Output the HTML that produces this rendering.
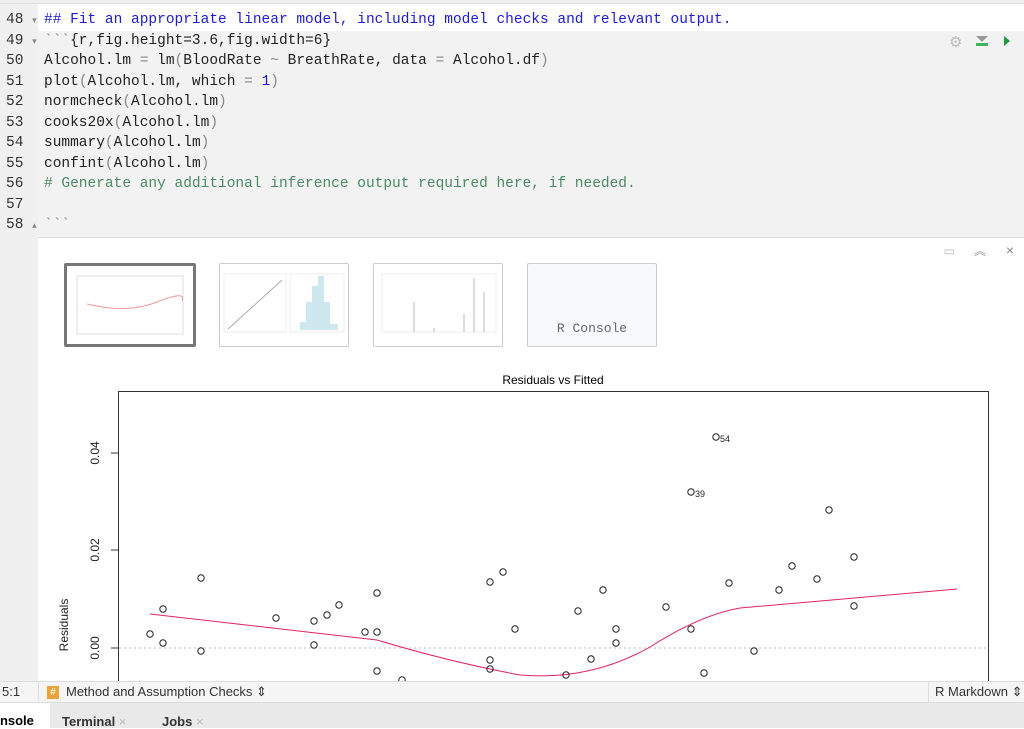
<!DOCTYPE html>
<html><head><style>
body{margin:0;width:1024px;height:727px;overflow:hidden;background:#fff;font-family:"Liberation Sans",sans-serif;position:relative}
.code{position:absolute;left:0;top:0;width:1024px;height:237px;background:#fff}
.gut{position:absolute;left:0;top:0;width:38px;height:681px;background:#f0f0f0}
.chunk{position:absolute;left:38px;top:31px;width:986px;height:206px;background:#f2f2f2}
.ln{position:absolute;font-family:"Liberation Mono",monospace;font-size:14.5px;white-space:pre;line-height:20.5px}
.num{color:#333;left:6px}
.txt{left:44px;color:#222}
.b{color:#1b1bd8}.g{color:#4b8c65}.o{color:#888}
.panel{position:absolute;left:38px;top:237px;width:986px;height:444px;background:#fff;border-top:1px solid #ddd}
.th{position:absolute;top:25px;width:128px;height:82px;border:1px solid #ccc;border-radius:2px;background:#fff}
.status{position:absolute;left:0;top:681px;width:1024px;height:20px;background:#f5f5f5;border-top:1px solid #ddd;border-bottom:1px solid #ddd;font-size:13px;color:#333}
.tabs{position:absolute;left:0;top:702px;width:1024px;height:25px;background:#e9e9e9;border-top:1px solid #ddd}
</style></head><body>
<div class="code"></div>
<div class="gut"></div>
<div class="chunk"></div>
<div style="position:absolute;left:0;top:0;width:1024px;height:3px;background:#eee;border-bottom:1px solid #ddd"></div>
<div class="ln num" style="top:10px">48 <span class="o" style="font-size:9px">▾</span></div>
<div class="ln txt b" style="top:10px">## Fit an appropriate linear model, including model checks and relevant output.</div>
<div class="ln num" style="top:31px">49 <span class="o" style="font-size:9px">▾</span></div>
<div class="ln txt" style="top:31px"><span class="o">&#96;&#96;&#96;</span>{r,fig.height=3.6,fig.width=6}</div>
<div class="ln num" style="top:51px">50</div>
<div class="ln txt" style="top:51px">Alcohol.lm <span class="o">=</span> lm<span class="o">(</span>BloodRate <span class="o">~</span> BreathRate, data <span class="o">=</span> Alcohol.df<span class="o">)</span></div>
<div class="ln num" style="top:72px">51</div>
<div class="ln txt" style="top:72px">plot<span class="o">(</span>Alcohol.lm, which <span class="o">=</span> <span class="b">1</span><span class="o">)</span></div>
<div class="ln num" style="top:92px">52</div>
<div class="ln txt" style="top:92px">normcheck<span class="o">(</span>Alcohol.lm<span class="o">)</span></div>
<div class="ln num" style="top:113px">53</div>
<div class="ln txt" style="top:113px">cooks20x<span class="o">(</span>Alcohol.lm<span class="o">)</span></div>
<div class="ln num" style="top:133px">54</div>
<div class="ln txt" style="top:133px">summary<span class="o">(</span>Alcohol.lm<span class="o">)</span></div>
<div class="ln num" style="top:154px">55</div>
<div class="ln txt" style="top:154px">confint<span class="o">(</span>Alcohol.lm<span class="o">)</span></div>
<div class="ln num" style="top:174px">56</div>
<div class="ln txt g" style="top:174px"># Generate any additional inference output required here, if needed.</div>
<div class="ln num" style="top:195px">57</div>
<div class="ln num" style="top:215px">58 <span class="o" style="font-size:9px">▴</span></div>
<div class="ln txt o" style="top:215px">&#96;&#96;&#96;</div>
<div style="position:absolute;left:949px;top:33px;color:#bbb;font-size:15px">⚙</div>
<div style="position:absolute;left:976px;top:36px;width:0;height:0;border-left:6px solid transparent;border-right:6px solid transparent;border-top:6px solid #999"></div>
<div style="position:absolute;left:976px;top:43px;width:12px;height:3px;background:#3cb55a"></div>
<div style="position:absolute;left:1004px;top:36px;width:0;height:0;border-top:5px solid transparent;border-bottom:5px solid transparent;border-left:6px solid #1a9e3a"></div>
<div class="panel">
<div style="position:absolute;right:69px;top:6px;color:#bbb;font-size:12px">▭</div>
<div style="position:absolute;right:38px;top:4px;color:#999;font-size:12px">︽</div>
<div style="position:absolute;right:10px;top:4px;color:#888;font-size:14px">×</div>
<div class="th" style="left:26px;border:3px solid #777;width:126px;height:78px"><svg width="126" height="78"><rect x="10" y="10" width="106" height="58" fill="none" stroke="#ddd"/><path d="M20 38 Q60 48 90 36 T115 35" stroke="#e99" fill="none"/></svg></div>
<div class="th" style="left:181px"><svg width="128" height="82"><rect x="4" y="10" width="62" height="58" fill="none" stroke="#eee"/><path d="M8 65 L62 16" stroke="#aaa"/><rect x="70" y="10" width="54" height="58" fill="none" stroke="#eee"/><rect x="80" y="58" width="6" height="8" fill="#cfe8ef"/><rect x="86" y="38" width="6" height="28" fill="#cfe8ef"/><rect x="92" y="22" width="6" height="44" fill="#cfe8ef"/><rect x="98" y="12" width="6" height="54" fill="#cfe8ef"/><rect x="104" y="38" width="6" height="28" fill="#cfe8ef"/><rect x="110" y="60" width="8" height="6" fill="#cfe8ef"/></svg></div>
<div class="th" style="left:335px"><svg width="128" height="82"><rect x="8" y="10" width="114" height="58" fill="none" stroke="#eee"/><path d="M40 68V38M60 68V64M100 68V14M110 68V28M90 68V50" stroke="#bbb"/></svg></div>
<div class="th" style="left:489px;background:#f8f9fc"><div style="position:absolute;left:0;right:0;top:57px;text-align:center;font-family:'Liberation Mono',monospace;font-size:13px;color:#666">R Console</div></div>
</div>
<svg style="position:absolute;left:0;top:237px" width="1024" height="444">
<text x="553" y="147" font-size="12" text-anchor="middle" font-family="Liberation Sans">Residuals vs Fitted</text>
<rect x="118.5" y="154.5" width="870" height="300" fill="none" stroke="#333"/>
<g stroke="#333"><line x1="111" y1="216" x2="118" y2="216"/><line x1="111" y1="313" x2="118" y2="313"/><line x1="111" y1="411" x2="118" y2="411"/></g>
<g font-size="12" font-family="Liberation Sans" fill="#222">
<text transform="translate(99,216) rotate(-90)" text-anchor="middle">0.04</text>
<text transform="translate(99,313) rotate(-90)" text-anchor="middle">0.02</text>
<text transform="translate(99,411) rotate(-90)" text-anchor="middle">0.00</text>
<text transform="translate(68,388) rotate(-90)" text-anchor="middle">Residuals</text>
<text x="720" y="205" font-size="9">54</text><text x="695" y="260" font-size="9">39</text>
</g>
<line x1="119" y1="411" x2="988" y2="411" stroke="#bbb" stroke-dasharray="2,3"/>
<path d="M150 377 L377 403 Q450 425 520 438 Q590 444 650 410 Q700 378 740 371 L957 352" fill="none" stroke="#e0245e"/>
<g fill="none" stroke="#222" stroke-width="1">
<circle cx="150" cy="397" r="3.2"/><circle cx="163" cy="372" r="3.2"/><circle cx="163" cy="406" r="3.2"/><circle cx="201" cy="341" r="3.2"/><circle cx="201" cy="414" r="3.2"/><circle cx="276" cy="381" r="3.2"/><circle cx="314" cy="384" r="3.2"/><circle cx="314" cy="408" r="3.2"/><circle cx="327" cy="378" r="3.2"/><circle cx="339" cy="368" r="3.2"/><circle cx="365" cy="395" r="3.2"/><circle cx="377" cy="356" r="3.2"/><circle cx="377" cy="395" r="3.2"/><circle cx="377" cy="434" r="3.2"/><circle cx="402" cy="443" r="3.2"/><circle cx="490" cy="345" r="3.2"/><circle cx="503" cy="335" r="3.2"/><circle cx="490" cy="423" r="3.2"/><circle cx="490" cy="432" r="3.2"/><circle cx="515" cy="392" r="3.2"/><circle cx="566" cy="438" r="3.2"/><circle cx="578" cy="374" r="3.2"/><circle cx="591" cy="422" r="3.2"/><circle cx="603" cy="353" r="3.2"/><circle cx="616" cy="392" r="3.2"/><circle cx="616" cy="406" r="3.2"/><circle cx="666" cy="370" r="3.2"/><circle cx="691" cy="392" r="3.2"/><circle cx="691" cy="255" r="3.2"/><circle cx="716" cy="200" r="3.2"/><circle cx="704" cy="436" r="3.2"/><circle cx="729" cy="346" r="3.2"/><circle cx="754" cy="414" r="3.2"/><circle cx="779" cy="353" r="3.2"/><circle cx="792" cy="329" r="3.2"/><circle cx="817" cy="342" r="3.2"/><circle cx="829" cy="273" r="3.2"/><circle cx="854" cy="320" r="3.2"/><circle cx="854" cy="369" r="3.2"/>
</g>
</svg>
<div class="status"><span style="position:absolute;left:2px;top:2px">5:1</span><span style="position:absolute;left:38px;top:0;height:20px;border-left:1px solid #ddd"></span>
<span style="position:absolute;left:47px;top:4px;width:12px;height:13px;background:#e8a33a;color:#fff;font-size:10px;text-align:center;line-height:13px">#</span>
<span style="position:absolute;left:66px;top:2px">Method and Assumption Checks ⇕</span>
<span style="position:absolute;left:928px;top:0;height:20px;border-left:1px solid #ddd"></span>
<span style="position:absolute;left:935px;top:2px">R Markdown ⇕</span></div>
<div class="tabs">
<div style="position:absolute;left:0;top:0;width:50px;height:25px;background:#fff;font-size:13px;font-weight:bold;padding:10px 0 0 0;box-sizing:border-box;text-indent:-8px">onsole</div>
<div style="position:absolute;left:62px;top:11px;font-size:13px;font-weight:bold;color:#333">Terminal <span style="color:#bbb;font-weight:normal">×</span></div>
<div style="position:absolute;left:162px;top:11px;font-size:13px;font-weight:bold;color:#333">Jobs <span style="color:#bbb;font-weight:normal">×</span></div>
</div>
</body></html>
